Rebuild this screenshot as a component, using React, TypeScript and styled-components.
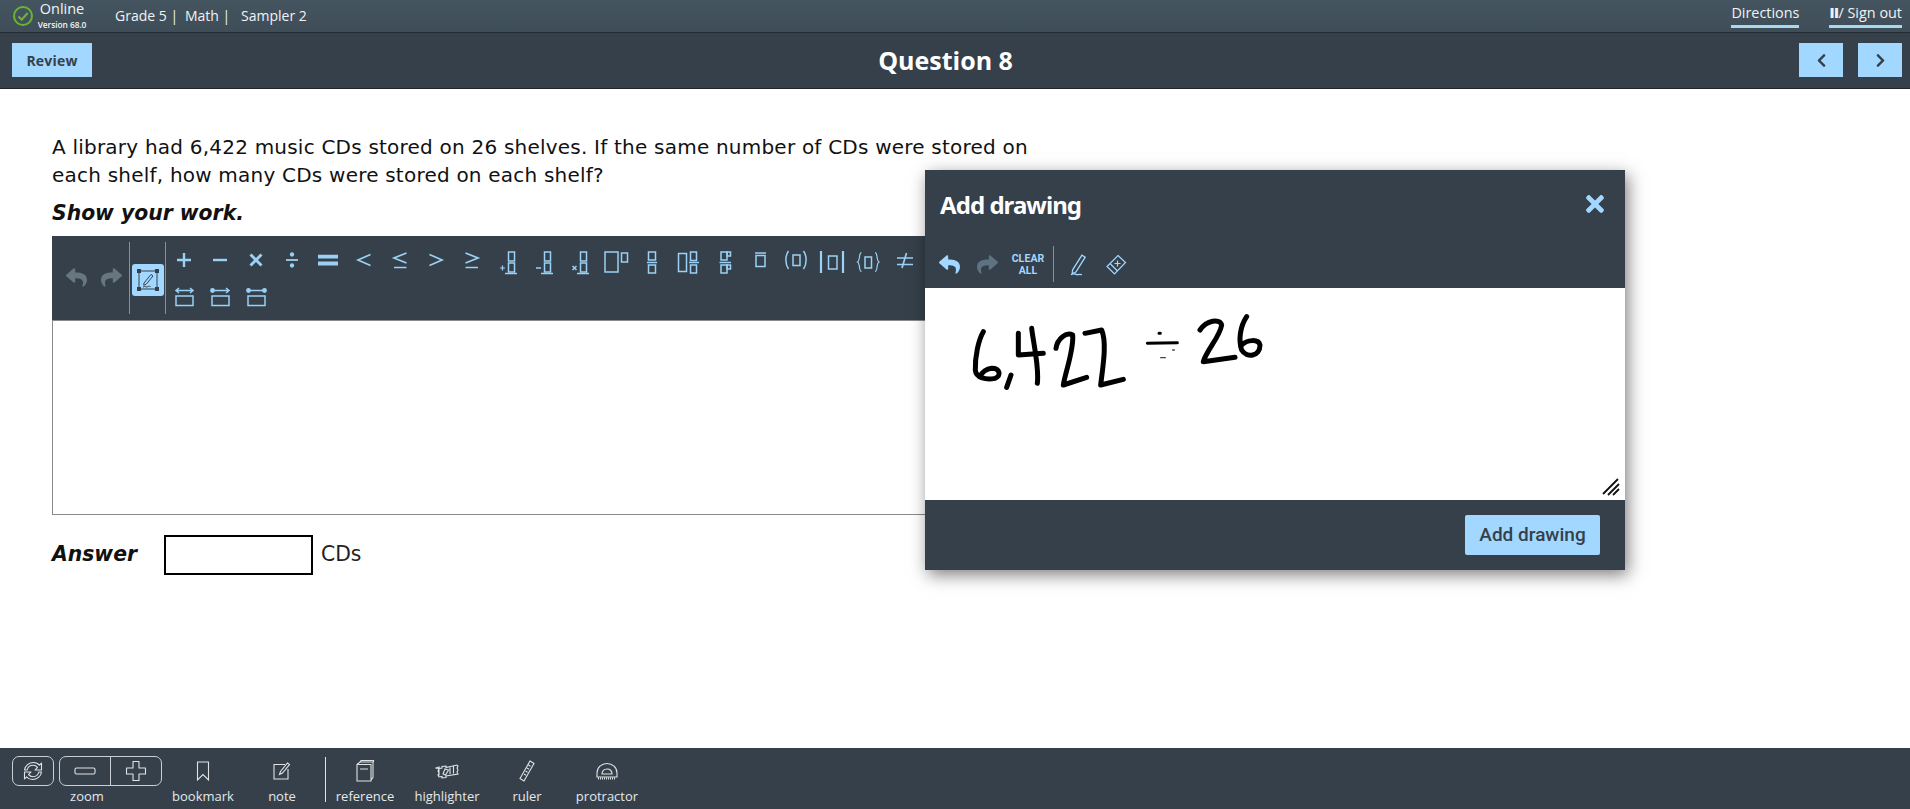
import React from "react";
import styled, { createGlobalStyle } from "styled-components";
import { FaReply, FaShare, FaTimes, FaChevronLeft, FaChevronRight } from "react-icons/fa";

const Global = createGlobalStyle`
  html, body { margin: 0; padding: 0; background: #fff; overflow: hidden; }
  #root { height: 100vh; }
  * { box-sizing: border-box; }
`;

const Page = styled.div`
  height: 809px; display: flex; flex-direction: column; position: relative;
  font-family: "Open Sans", "Liberation Sans", sans-serif;
`;
const TopBar = styled.header`
  height: 33px; flex: none; display: flex; align-items: stretch; justify-content: space-between;
  background: linear-gradient(#45555f, #3e4d58); border-bottom: 1px solid #232c33; color: #f0f3f5;
  padding: 0 8px 0 13px;
`;
const Status = styled.div`display: flex; align-items: center; gap: 6px; width: 102px;`;
const StatusText = styled.div`display: flex; flex-direction: column; align-items: center; width: 46px; margin-top: 1px;`;
const Online = styled.span`font-size: 14.5px; line-height: 18px; margin-top: -3px;`;
const Version = styled.span`font-size: 8.4px; line-height: 12px; font-weight: 600; white-space: nowrap; margin-top: 1px; letter-spacing: -.05px;`;
const Crumbs = styled.div`display: flex; flex: 1; align-items: center; font-size: 14px; white-space: pre; padding-bottom: 1px;`;
const Crumb = styled.span<{ $w: number }>`width: ${(p) => p.$w}px;`;
const Links = styled.div`display: flex; gap: 30px;`;
const TopLink = styled.a`
  font-size: 14.4px; height: 28px; line-height: 26px; border-bottom: 3px solid #a8d8ea; color: #f0f3f5; white-space: pre;
`;
const Bars = styled.b`font-weight: 800; letter-spacing: -0.5px;`;

const TitleBar = styled.div`
  height: 56px; flex: none; display: flex; align-items: center; justify-content: space-between;
  background: #35404a; border-bottom: 1px solid #1e262c; padding: 0 8px 1px 12px;
`;
const LightButton = styled.button`
  border: none; background: #a2d7ff; color: #35404a; height: 34px; padding: 0; cursor: pointer;
  display: flex; align-items: center; justify-content: center; font-family: inherit;
`;
const ReviewButton = styled(LightButton)`width: 80px; font-size: 14px; font-weight: 700; letter-spacing: .2px;`;
const NavGroup = styled.div`display: flex; gap: 15px;`;
const NavButton = styled(LightButton)`width: 44px;`;
const Title = styled.h1`margin: 0; color: #fff; font-size: 25px; font-weight: 700; line-height: 34px;`;

const Content = styled.main`
  flex: 1; padding: 44px 0 0 52px; color: #111; font-family: "DejaVu Sans", Verdana, sans-serif;
`;
const Stem = styled.p`margin: 0; font-size: 20px; letter-spacing: .215px; line-height: 28px; width: 1000px;`;
const Emph = styled.p`margin: 10px 0 9px; font-size: 20.35px; line-height: 28px; font-weight: 700; font-style: italic;`;
const Editor = styled.section`width: 1200px;`;
const EdToolbar = styled.div`height: 84px; background: #35404a; display: flex; padding-left: 6px;`;
const HistoryGroup = styled.div`width: 71px; display: flex; align-items: center; color: #67767f; padding: 0 0 2px 1px;`;
const HistoryCell = styled.span`width: 36px; display: flex; justify-content: center;`;
const VSep = styled.span`width: 1px; margin: 6px 0; background: #7d95a5; flex: none;`;
const PenSlot = styled.div`width: 35px; display: flex; align-items: center; justify-content: center; padding-top: 4px;`;
const PenButton = styled.div`width: 32px; height: 32px; border-radius: 3px; background: #a2d7ff; display: flex; align-items: center; justify-content: center;`;
const MathGrid = styled.div`display: grid; grid-template-columns: repeat(21, 36px); grid-auto-rows: 39px; padding-top: 4px;`;
const MathCell = styled.svg.attrs({ viewBox: "0 0 36 39", width: 36, height: 39 })`
  fill: none; stroke: #9ad1f5; stroke-width: 1.5; display: block;
`;
const Answerbox = styled.div`height: 195px; border: 1px solid #8a8a8a; background: #fff;`;
const AnswerRow = styled.div`margin-top: 20px; display: flex; align-items: center; height: 40px;`;
const AnswerLabel = styled.span`font-size: 20.35px; font-weight: 700; font-style: italic; width: 112px; margin-top: -2px;`;
const AnswerInput = styled.div`width: 149px; height: 40px; border: 2px solid #000; background: #fff;`;
const Unit = styled.span`font-size: 20.35px; margin-left: 8px; color: #222; margin-top: -2px;`;

const Dialog = styled.div`
  position: absolute; left: 925px; top: 170px; width: 700px; height: 400px; background: #35404a;
  display: flex; flex-direction: column; box-shadow: 3px 5px 16px rgba(0,0,0,.5);
`;
const DialogHead = styled.div`height: 71px; display: flex; align-items: center; justify-content: space-between; padding: 0 17px 3px 15px; flex: none;`;
const DialogTitle = styled.h2`margin: 0; font-family: "Noto Sans", sans-serif; font-weight: 700; font-size: 24px; letter-spacing: -.95px; color: #fff;`;
const CloseIcon = styled.span`color: #a2d7ff; display: flex;`;
const DialogTools = styled.div`height: 47px; display: flex; align-items: center; padding-left: 6px; flex: none;`;
const DTool = styled.span<{ $off?: boolean; $w: number }>`
  width: ${(p) => p.$w}px; display: flex; justify-content: center; align-items: center;
  color: ${(p) => (p.$off ? "#5f7280" : "#a2d7ff")};
`;
const ClearAll = styled.span`
  width: 42px; font-family: "Roboto", sans-serif; font-weight: 700; font-size: 10.5px; line-height: 12px; text-align: center; color: #a2d7ff; letter-spacing: .1px;
`;
const DSep = styled.span`width: 1px; height: 36px; background: #7d95a5; margin: 0 2px 2px 4px;`;
const Canvas = styled.div`flex: 1; background: #fff; position: relative; padding: 12px 0 0 25px;`;
const Grip = styled.svg.attrs({ viewBox: "0 0 18 18", width: 18, height: 18 })`
  position: absolute; right: 5px; bottom: 4px; stroke: #111; stroke-width: 1.8; fill: none;
`;
const DialogFoot = styled.div`height: 70px; display: flex; justify-content: flex-end; align-items: center; padding: 0 25px 0 0; flex: none;`;
const AddButton = styled(LightButton)`
  width: 135px; height: 40px; border-radius: 2px; font-family: "Roboto", sans-serif; font-weight: 500; font-size: 19px; padding-bottom: 2px;
`;

const Footer = styled.footer`height: 61px; flex: none; background: #35404a; display: flex; padding: 8px 0 0 12px; color: #e4e8ea;`;
const ToolItem = styled.div<{ $w: number }>`
  width: ${(p) => p.$w}px; display: flex; flex-direction: column; align-items: center; flex: none;
`;
const ToolIcon = styled.div`height: 30px; display: flex; align-items: center; justify-content: center; gap: 5px;`;
const ToolLabel = styled.span`font-size: 13px; font-weight: 500; line-height: 18px; margin-top: 1px; white-space: nowrap;`;
const OutlineBtn = styled.div<{ $w: number }>`
  width: ${(p) => p.$w}px; height: 30px; border: 1px solid #c9cfd3; border-radius: 7px; display: flex; align-items: center; justify-content: center;
`;
const ZoomPair = styled.div`display: flex; width: 103px; height: 30px; border: 1px solid #c9cfd3; border-radius: 7px;`;
const ZoomHalf = styled.div<{ $line?: boolean }>`
  flex: 1; display: flex; align-items: center; justify-content: center;
  border-left: ${(p) => (p.$line ? "1px solid #c9cfd3" : "none")};
`;
const FootSep = styled.span`width: 1px; height: 45px; background: #dfe3e6; margin: 1px 0 0 5px; flex: none;`;
const FootSvg = styled.svg`fill: none; stroke: #dfe3e6; stroke-width: 1.1; display: block;`;

const sq = (x: number, y: number, w: number, h: number) => <rect x={x} y={y} width={w} height={h} />;

const cells: React.ReactNode[] = [
  <path d="M11 20h14M18 13v14" strokeWidth="2.4" />,
  <path d="M11 20h14" strokeWidth="2.4" />,
  <path d="M12.5 14.5l11 11M23.5 14.5l-11 11" strokeWidth="3" />,
  <><path d="M12 20h12" strokeWidth="1.8" /><circle cx="18" cy="14.5" r="1.4" fill="#9ad1f5" /><circle cx="18" cy="25.5" r="1.4" fill="#9ad1f5" /></>,
  <path d="M8 16.7h20M8 23.5h20" strokeWidth="3.8" />,
  <path d="M24.5 14.5L12 20l12.5 5.5" strokeWidth="1.7" />,
  <path d="M24.5 13L12 18l12.5 5M12 27.5h12.5" strokeWidth="1.7" />,
  <path d="M11.5 14.5L24 20l-12.5 5.5" strokeWidth="1.7" />,
  <path d="M11.5 13L24 18l-12.5 5M11.5 27.5H24" strokeWidth="1.7" />,
  <>{sq(18.5, 12, 6, 9)}{sq(18.5, 23, 6, 9)}<path d="M15 33.5h12" /><path d="M10 28h5M12.5 25.5v5" strokeWidth="1.2" /></>,
  <>{sq(18.5, 12, 6, 9)}{sq(18.5, 23, 6, 9)}<path d="M15 33.5h12M10 28h5" /></>,
  <>{sq(18.5, 12, 6, 9)}{sq(18.5, 23, 6, 9)}<path d="M15 33.5h12M10.5 26l4 4M14.5 26l-4 4" /></>,
  <>{sq(7, 12, 13, 20)}{sq(23.5, 13, 6, 9)}</>,
  <>{sq(14.5, 12, 7, 8)}<path d="M13 22.5h10" />{sq(14.5, 25, 7, 8)}</>,
  <>{sq(8.5, 13.5, 8, 18)}{sq(20.5, 12, 6, 8.5)}<path d="M19 22.5h10" />{sq(20.5, 25, 6, 8)}</>,
  <>{sq(15, 12, 6, 8)}{sq(21, 12, 3.5, 4)}<path d="M13.5 22.5h11.5" />{sq(15, 25, 6, 8)}{sq(21, 25, 3.5, 4)}</>,
  <><path d="M13 13h11" />{sq(14, 15.5, 9, 11)}</>,
  <>{sq(15, 15, 7, 10.5)}<path d="M10.5 11c-3.5 5-3.5 13 0 18M25.5 11c3.5 5 3.5 13 0 18" strokeWidth="1.5" /></>,
  <>{sq(14.5, 16, 8.5, 13)}<path d="M7 11v22M29 11v22" strokeWidth="2.2" /></>,
  <>{sq(15, 17, 6.5, 11)}<path d="M11.5 12.5c-3 0-1 8-4 9.5 3 1.5 1 9.5 4 9.5M25 12.5c3 0 1 8 4 9.5-3 1.5-1 9.5-4 9.5" strokeWidth="1.2" /></>,
  <path d="M11 18h16M11 24.5h16M20.5 13l-4.5 15" strokeWidth="1.7" />,
  <>{sq(10, 17, 17, 9.5)}<path d="M10 11.5h17M13 9l-3 2.5 3 2.5M24 9l3 2.5-3 2.5" /></>,
  <>{sq(10, 17, 17, 9.5)}<path d="M11 11.5h16M24 9l3 2.5-3 2.5" /><circle cx="10.5" cy="11.5" r="1.7" fill="#9ad1f5" /></>,
  <>{sq(10, 17, 17, 9.5)}<path d="M11 11.5h15" /><circle cx="10.5" cy="11.5" r="1.7" fill="#9ad1f5" /><circle cx="26.5" cy="11.5" r="1.7" fill="#9ad1f5" /></>,
];

const PenBadge = () => (
  <svg width="24" height="24" viewBox="0 0 24 24" fill="none" stroke="#35404a" strokeWidth="1">
    <rect x="3" y="3" width="18" height="18" />
    {[[3, 3], [21, 3], [3, 21], [21, 21]].map(([x, y]) => (
      <rect key={x * 10 + y} x={x - 1.5} y={y - 1.5} width="3" height="3" fill="#35404a" />
    ))}
    <path d="M8 15l7-8.5 2 1.5-7 8.5-2.3.6zM7 19c2-1.5 3 .5 4 0s2-1 3.5-.5" />
  </svg>
);

const Handwriting = () => (
  <svg viewBox="0 0 1020 330" width="340" height="110" fill="none" stroke="#000" strokeWidth="15" strokeLinecap="round" strokeLinejoin="round">
    <path d="M100 95C85 120 75 170 76 210C78 235 110 240 135 235C155 228 150 205 125 205C105 207 95 220 90 230" />
    <path d="M183 225L170 262" />
    <path d="M205 100L205 165L280 160M245 85C250 130 268 200 262 250" />
    <path d="M318 145C322 115 350 95 368 105C372 150 345 220 340 255L410 232" />
    <path d="M405 100L455 90C472 130 457 210 452 255L520 238" />
    <path d="M592 130L682 128M627 100h4" strokeWidth="9" />
    <path d="M632 173h14M668 150h5" strokeWidth="4" stroke="#444" />
    <path d="M750 90C770 60 810 55 815 75C810 110 770 150 760 185L855 172" />
    <path d="M890 50C870 80 865 120 875 150C890 175 930 170 930 135C925 115 890 120 875 135" />
  </svg>
);

const MinusIcon = () => (
  <FootSvg width="22" height="10" viewBox="0 0 22 10"><rect x="1" y="2" width="20" height="6" rx="1.5" /></FootSvg>
);
const PlusIcon = () => (
  <FootSvg width="22" height="22" viewBox="0 0 22 22"><path d="M8 1.5h6v6.5h6.5v6H14v6.5H8V14H1.5V8H8z" strokeLinejoin="round" /></FootSvg>
);
const RotateIcon = () => (
  <FootSvg width="22" height="22" viewBox="0 0 22 22">
    <path d="M2.5 10C3 5.5 7 2.5 11.5 2.5c2.500 0 4.500 1 6 2.700L19.500 3v7h-6.500l2.500-2.700C14.300 6 12.800 5.300 11.200 5.300 8 5.300 5.700 7.300 5.200 10zM19.500 12c-.5 4.500-4.500 7.500-9 7.500-2.500 0-4.500-1-6-2.700L2.500 19v-7H9l-2.500 2.700c1.200 1.300 2.700 2 4.300 2 3.200 0 5.500-2 6-4.700z" strokeLinejoin="round" />
  </FootSvg>
);

const App = () => (
  <Page>
    <Global />
    <TopBar>
      <Status>
        <svg width="20" height="20" viewBox="0 0 20 20" fill="none" stroke="#6ab52f" strokeWidth="2">
          <circle cx="10" cy="10" r="9" />
          <path d="M5.5 10.5l3.2 3.2 6-6.7" strokeWidth="2.2" />
        </svg>
        <StatusText>
          <Online>Online</Online>
          <Version>Version 68.0</Version>
        </StatusText>
      </Status>
      <Crumbs>
        <Crumb $w={70}>Grade 5 |</Crumb>
        <Crumb $w={56}>Math |</Crumb>
        <Crumb $w={80}>Sampler 2</Crumb>
      </Crumbs>
      <Links>
        <TopLink>Directions</TopLink>
        <TopLink><Bars>II</Bars>/ Sign out</TopLink>
      </Links>
    </TopBar>
    <TitleBar>
      <ReviewButton>Review</ReviewButton>
      <Title>Question 8</Title>
      <NavGroup>
        <NavButton><FaChevronLeft size={15} /></NavButton>
        <NavButton><FaChevronRight size={15} /></NavButton>
      </NavGroup>
    </TitleBar>
    <Content>
      <Stem>A library had 6,422 music CDs stored on 26 shelves. If the same number of CDs were stored on each shelf, how many CDs were stored on each shelf?</Stem>
      <Emph>Show your work.</Emph>
      <Editor>
        <EdToolbar>
          <HistoryGroup>
            <HistoryCell><FaReply size={21} /></HistoryCell>
            <HistoryCell><FaShare size={21} /></HistoryCell>
          </HistoryGroup>
          <VSep />
          <PenSlot><PenButton><PenBadge /></PenButton></PenSlot>
          <VSep />
          <MathGrid>
            {cells.map((c, i) => <MathCell key={i}>{c}</MathCell>)}
          </MathGrid>
        </EdToolbar>
        <Answerbox />
      </Editor>
      <AnswerRow>
        <AnswerLabel>Answer</AnswerLabel>
        <AnswerInput />
        <Unit>CDs</Unit>
      </AnswerRow>
    </Content>
    <Dialog>
      <DialogHead>
        <DialogTitle>Add drawing</DialogTitle>
        <CloseIcon><FaTimes size={26} /></CloseIcon>
      </DialogHead>
      <DialogTools>
        <DTool $w={37}><FaReply size={21} /></DTool>
        <DTool $w={39} $off><FaShare size={21} /></DTool>
        <ClearAll>CLEAR<br />ALL</ClearAll>
        <DSep />
        <DTool $w={42}>
          <svg width="20" height="24" viewBox="-2 0 18 22" fill="none" stroke="#a2d7ff" strokeWidth="1.2">
            <path d="M3 15.5L11.5 2l3 1.8L6 17.5l-3.5 1.5zM1.5 20c3-2.5 4 .5 6.5-.2 1.5-.4 2-.3 3.5 0" />
          </svg>
        </DTool>
        <DTool $w={36}>
          <svg width="22" height="22" viewBox="0 0 22 22" fill="none" stroke="#a2d7ff" strokeWidth="1.2">
            <path d="M13 1.5l7.5 7-11 11.5-7.5-7.5zM5 9.5l7.5 7.5M12.5 6.5v6M9.5 9.5h6" />
          </svg>
        </DTool>
      </DialogTools>
      <Canvas>
        <Handwriting />
        <Grip><path d="M1 16L16 1M6 17L17 6M11 17l6-6" /></Grip>
      </Canvas>
      <DialogFoot><AddButton>Add drawing</AddButton></DialogFoot>
    </Dialog>
    <Footer>
      <ToolItem $w={150}>
        <ToolIcon>
          <OutlineBtn $w={42}><RotateIcon /></OutlineBtn>
          <ZoomPair>
            <ZoomHalf><MinusIcon /></ZoomHalf>
            <ZoomHalf $line><PlusIcon /></ZoomHalf>
          </ZoomPair>
        </ToolIcon>
        <ToolLabel>zoom</ToolLabel>
      </ToolItem>
      <ToolItem $w={82}>
        <ToolIcon>
          <FootSvg width="14" height="20" viewBox="0 0 14 20"><path d="M1.5 1h11v18L7 13.5 1.5 19z" /></FootSvg>
        </ToolIcon>
        <ToolLabel>bookmark</ToolLabel>
      </ToolItem>
      <ToolItem $w={76}>
        <ToolIcon>
          <FootSvg width="20" height="20" viewBox="0 0 20 20" strokeWidth="1.4"><path d="M13 3.5H2V18h14V8M7.5 13.5l1-3L15.5 2l2 1.5L10.5 12z" /></FootSvg>
        </ToolIcon>
        <ToolLabel>note</ToolLabel>
      </ToolItem>
      <FootSep />
      <ToolItem $w={78}>
        <ToolIcon>
          <FootSvg width="20" height="24" viewBox="0 0 20 24"><path d="M2 5.5V22h14V5.5zM2 5.5L5 3h13v15.5L16 21M5 3l1-1.5h12.5V3M5 10h8" /></FootSvg>
        </ToolIcon>
        <ToolLabel>reference</ToolLabel>
      </ToolItem>
      <ToolItem $w={86}>
        <ToolIcon>
          <FootSvg width="24" height="16" viewBox="0 0 24 16"><path d="M1 5l3-1v1.500l3-.5V3.500l4-.5v1.500L22 2l1 1-1 2 1 2-1 2 1 2-12 2v1.500l-4 .5v-1.500l-3 .5-1-2 1-2-1-2 1-2zM4 5.500v7M10 6l-2 5 2.500 1 3-5zM15 3.500v7.500M18.500 3v7.500" /></FootSvg>
        </ToolIcon>
        <ToolLabel>highlighter</ToolLabel>
      </ToolItem>
      <ToolItem $w={74}>
        <ToolIcon>
          <FootSvg width="16" height="22" viewBox="0 0 16 22"><path d="M11 1l4 2.5L5 21l-4-2.5zM9.5 5l2 1.3M8 8l2 1.3M6.5 11l2 1.3M5 14l2 1.3" /></FootSvg>
        </ToolIcon>
        <ToolLabel>ruler</ToolLabel>
      </ToolItem>
      <ToolItem $w={86}>
        <ToolIcon>
          <FootSvg width="22" height="18" viewBox="0 0 22 18"><path d="M1 15v-4C1 5.5 5.5 1.5 11 1.5S21 5.5 21 11v4zM6 12c0-3 2-5 5-5s5 2 5 5z" /><path d="M2 16.5h18" strokeDasharray="1 1" strokeWidth="2" /></FootSvg>
        </ToolIcon>
        <ToolLabel>protractor</ToolLabel>
      </ToolItem>
    </Footer>
  </Page>
);

export default App;
